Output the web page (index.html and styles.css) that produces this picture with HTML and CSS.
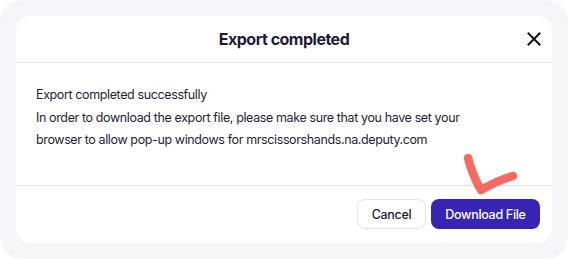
FILE: index.html
```html
<!DOCTYPE html>
<html>
<head>
<meta charset="utf-8">
<link rel="stylesheet" href="styles.css">
</head>
<body>
<div class="frame">
  <div class="card">
    <div class="header">
      <h1 class="title">Export completed</h1>
      <button class="close" aria-label="Close">
        <svg width="14" height="14" viewBox="0 0 14 14"><path d="M1.5 1.5 L12.5 12.5 M12.5 1.5 L1.5 12.5" stroke="#111" stroke-width="2" stroke-linecap="square" fill="none"/></svg>
      </button>
    </div>
    <div class="body">
      <p class="msg">Export completed successfully</p>
      <p class="msg">In order to download the export file, please make sure that you have set your<br>browser to allow pop-up windows for mrscissorshands.na.deputy.com</p>
    </div>
    <div class="footer">
      <button class="btn btn-secondary">Cancel</button>
      <button class="btn btn-primary">Download File</button>
    </div>
  </div>
  <svg class="mark" width="60" height="50" viewBox="0 0 60 50"><path d="M8 8 C11 20 15 30 21 40 C30 35 42 29 53 26" stroke="#fa6961" stroke-width="8.5" stroke-linecap="round" stroke-linejoin="round" fill="none"/></svg>
</div>
</body>
</html>
```

FILE: styles.css
```css
* { box-sizing: border-box; }
html, body { margin: 0; padding: 0; background: #ffffff; }
body { font-family: Inter, "Noto Sans", sans-serif; color: #1f1d3a; }
.frame {
  position: relative;
  width: 568px;
  height: 259px;
  background: #f6f6f9;
  border-radius: 22px;
  padding: 16px;
}
.card {
  background: #ffffff;
  border-radius: 14px;
  height: 227px;
  display: flex;
  flex-direction: column;
}
.header {
  height: 47px;
  border-bottom: 1px solid #e4e4e9;
  display: flex;
  align-items: center;
  justify-content: center;
  position: relative;
}
.title {
  margin: 0;
  font-size: 16px;
  font-weight: 700;
  color: #1d1b3b;
  letter-spacing: -0.5px;
}
.close {
  position: absolute;
  right: 11px;
  top: 16px;
  width: 14px;
  height: 14px;
  padding: 0;
  border: 0;
  background: none;
  display: flex;
}
.body {
  height: 123px;
  border-bottom: 1px solid #e4e4e9;
  padding: 21px 20px 0 20px;
}
.msg {
  margin: 0 0 1px 0;
  font-size: 12.5px;
  line-height: 22px;
  letter-spacing: -0.38px;
  color: #1f1d3a;
}
.footer {
  flex: 1;
  display: flex;
  justify-content: flex-end;
  align-items: flex-start;
  gap: 5px;
  padding: 13px 12px 0 0;
}
.btn {
  height: 30px;
  border-radius: 8px;
  font-family: Inter, "Noto Sans", sans-serif;
  font-size: 12.5px;
  font-weight: 500;
  letter-spacing: -0.3px;
  padding: 0;
  cursor: pointer;
}
.btn-secondary {
  width: 69px;
  background: #ffffff;
  border: 1px solid #e2e2e8;
  color: #1f1d3a;
}
.btn-primary {
  width: 109px;
  background: #3824b4;
  border: 0;
  color: #ffffff;
}
.mark {
  position: absolute;
  left: 460px;
  top: 150px;
}
```
